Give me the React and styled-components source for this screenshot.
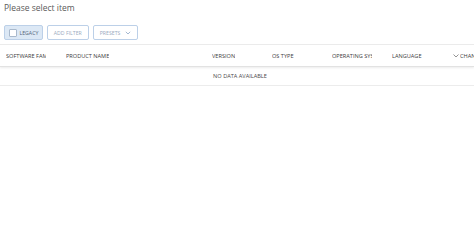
import styled, { createGlobalStyle } from "styled-components";

const GlobalStyle = createGlobalStyle`
  html, body {
    margin: 0;
    padding: 0;
    background: #ffffff;
    font-family: "Open Sans", "Noto Sans", sans-serif;
  }
`;

const columns = [
  { label: "Software Family", width: 60 },
  { label: "Product Name", width: 146 },
  { label: "Version", width: 60 },
  { label: "OS Type", width: 60 },
  { label: "Operating System", width: 60 },
  { label: "Language", width: 60 },
  { label: "Channel", width: 80, sort: true },
];

export default function App() {
  return (
    <Page>
      <GlobalStyle />
      <Title>Please select item</Title>
      <Toolbar>
        <ToolButton $active>
          <Check />
          Legacy
        </ToolButton>
        <ToolButton>Add Filter</ToolButton>
        <ToolButton $wide>
          Presets
          <svg width="6" height="4" viewBox="0 0 6 4">
            <path d="M0.8 0.8 L3 3 L5.2 0.8" fill="none" stroke="#9ab0cc" strokeWidth="0.9" />
          </svg>
        </ToolButton>
      </Toolbar>
      <Table>
        <HeadRow>
          {columns.map((c) => (
            <HeadCell key={c.label} style={{ width: c.width }} $sort={c.sort}>
              {c.sort && (
                <SortIcon width="6" height="4" viewBox="0 0 6 4">
                  <path d="M0.5 0.5 L3 3 L5.5 0.5" fill="none" stroke="#888" strokeWidth="0.9" />
                </SortIcon>
              )}
              <CellText>{c.label}</CellText>
            </HeadCell>
          ))}
        </HeadRow>
        <EmptyRow>No data available</EmptyRow>
      </Table>
    </Page>
  );
}

const Page = styled.div`
  width: 474px;
  height: 252px;
  overflow: hidden;
  background: #ffffff;
`;

const Title = styled.div`
  padding: 2px 0 0 4px;
  font-size: 8.5px;
  line-height: 11px;
  color: #5a5a5a;
`;

const Toolbar = styled.div`
  display: flex;
  gap: 4px;
  padding: 12px 0 0 4px;
  height: 15px;
`;

const ToolButton = styled.div`
  box-sizing: border-box;
  display: flex;
  align-items: center;
  justify-content: center;
  gap: ${(p) => (p.$wide ? "5px" : "3px")};
  height: 15px;
  padding: 0 ${(p) => (p.$active ? "3.5px" : "6px")};
  min-width: ${(p) => (p.$wide ? "44px" : "auto")};
  border: 1px solid #bcd0e8;
  border-radius: 2px;
  background: ${(p) => (p.$active ? "#dce8f5" : "#ffffff")};
  color: ${(p) => (p.$active ? "#55657a" : "#9aaac0")};
  font-size: 5.2px;
  text-transform: uppercase;
`;

const Check = styled.span`
  box-sizing: border-box;
  width: 8px;
  height: 8px;
  border: 1px solid #a9b9cc;
  border-radius: 1px;
  background: #ffffff;
`;

const Table = styled.div`
  margin-top: 4px;
  border-top: 1px solid #ececec;
`;

const HeadRow = styled.div`
  display: flex;
  height: 21px;
  align-items: center;
  border-bottom: 1px solid #e2e2e2;
  box-shadow: 0 1px 2px rgba(0, 0, 0, 0.08);
`;

const HeadCell = styled.div`
  flex-shrink: 0;
  box-sizing: border-box;
  display: flex;
  align-items: center;
  gap: 1px;
  padding: 0 14px 0 ${(p) => (p.$sort ? "7px" : "6px")};
  overflow: hidden;
  white-space: nowrap;
`;

const CellText = styled.span`
  font-size: 5.6px;
  text-transform: uppercase;
  color: #404040;
  overflow: hidden;
`;

const SortIcon = styled.svg`
  flex-shrink: 0;
`;

const EmptyRow = styled.div`
  height: 18px;
  display: flex;
  align-items: center;
  justify-content: center;
  padding-left: 6px;
  font-size: 5.6px;
  text-transform: uppercase;
  color: #4a4a4a;
  border-bottom: 1px solid #ececec;
`;
